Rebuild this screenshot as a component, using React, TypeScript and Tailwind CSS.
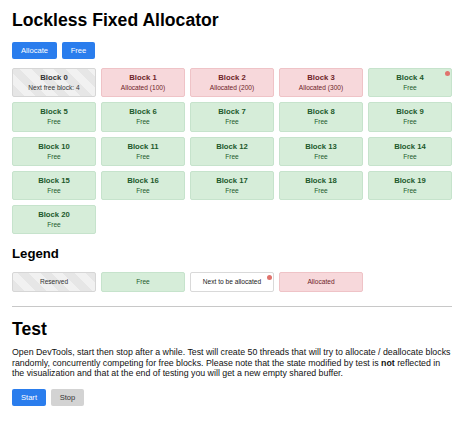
const blocks = [
  { id: 0, kind: "reserved", label: "Next free block: 4" },
  { id: 1, kind: "allocated", label: "Allocated (100)" },
  { id: 2, kind: "allocated", label: "Allocated (200)" },
  { id: 3, kind: "allocated", label: "Allocated (300)" },
  ...Array.from({ length: 17 }, (_, i) => ({
    id: i + 4,
    kind: "free",
    label: "Free",
  })),
];

const kindClass: Record<string, string> = {
  reserved:
    "border-[#d6d6d6] text-[#333] bg-[repeating-linear-gradient(45deg,#e6e6e6_0px,#e6e6e6_8px,#f1f1f1_8px,#f1f1f1_16px)]",
  free: "border-[#c6e3cc] bg-[#d6edd9] text-[#1d5a2c]",
  allocated: "border-[#efc3c7] bg-[#f7d8db] text-[#6e2429]",
  next: "border-[#d9d9d9] bg-white text-[#222]",
};

const Dot = () => (
  <span className="absolute right-[1px] top-[1.5px] h-[5.5px] w-[5.5px] rounded-full bg-[#e0736d]" />
);

const Block = ({ id, kind, label }: any) => (
  <div
    className={`relative flex h-[29.3px] flex-col items-center justify-center rounded-[2px] border ${kindClass[kind]}`}
  >
    <div className="text-[7.7px] font-bold leading-[9px]">Block {id}</div>
    <div className="mt-[1px] text-[6.6px] leading-[9px]">{label}</div>
    {id === 4 && <Dot />}
  </div>
);

const legend = [
  { kind: "reserved", title: "Reserved" },
  { kind: "free", title: "Free" },
  { kind: "next", title: "Next to be allocated" },
  { kind: "allocated", title: "Allocated" },
];

export default function App() {
  return (
    <div className="w-[474px] bg-white px-[12px] pt-[10px] font-['Liberation_Sans',Arial,sans-serif] text-black">
      <div className="w-[440px]">
        <h1 className="text-[17.6px] font-bold leading-[20px]">
          Lockless Fixed Allocator
        </h1>
        <div className="mt-[12px] flex gap-[5px]">
          <button className="h-[17px] w-[45px] rounded-[2px] bg-[#2a7ded] text-[7.6px] text-white">
            Allocate
          </button>
          <button className="h-[17px] w-[33px] rounded-[2px] bg-[#2a7ded] text-[7.6px] text-white">
            Free
          </button>
        </div>
        <div className="mt-[9px] grid grid-cols-5 gap-[5px]">
          {blocks.map((b) => (
            <Block key={b.id} {...b} />
          ))}
        </div>
        <h2 className="mt-[12px] text-[13.2px] font-bold leading-[15px]">
          Legend
        </h2>
        <div className="mt-[11px] grid grid-cols-5 gap-[5px]">
          {legend.map((l) => (
            <div
              key={l.title}
              className={`relative flex h-[19.4px] items-center justify-center rounded-[2px] border text-[6.6px] ${kindClass[l.kind]}`}
            >
              {l.title}
              {l.kind === "next" && <Dot />}
            </div>
          ))}
        </div>
        <hr className="mt-[14px] border-t border-[#c8c8c8]" />
        <h1 className="mt-[12px] text-[17.6px] font-bold leading-[20px]">
          Test
        </h1>
        <div className="mt-[8.5px] whitespace-nowrap text-[8.8px] leading-[10.2px] text-[#111]">
          <p>
            Open DevTools, start then stop after a while. Test will create 50
            threads that will try to allocate / deallocate blocks
          </p>
          <p>
            randomly, concurrently competing for free blocks. Please note that
            the state modified by test is <b>not</b> reflected in
          </p>
          <p>
            the visualization and that at the end of testing you will get a new
            empty shared buffer.
          </p>
        </div>
        <div className="mt-[11.5px] flex gap-[5px] pb-[14px]">
          <button className="h-[17px] w-[34px] rounded-[2px] bg-[#2a7ded] text-[7.6px] text-white">
            Start
          </button>
          <button className="h-[17px] w-[33px] rounded-[2px] bg-[#d3d3d3] text-[7.6px] text-[#333]">
            Stop
          </button>
        </div>
      </div>
    </div>
  );
}
